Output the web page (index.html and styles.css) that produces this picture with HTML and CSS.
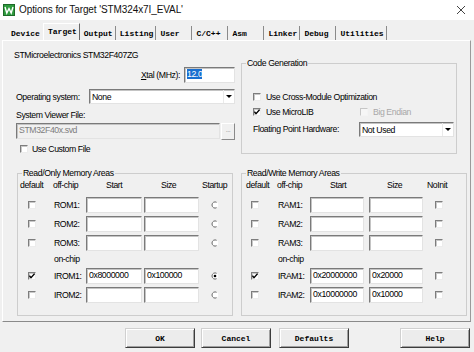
FILE: index.html
```html
<!DOCTYPE html>
<html>
<head>
<meta charset="utf-8">
<title>Options for Target</title>
<link rel="stylesheet" href="styles.css">
</head>
<body>
<div class="titlebar">
  <svg class="appicon" width="12" height="12" viewBox="0 0 12 12"><rect x="0.5" y="0.5" width="11" height="11" fill="#2f9b3e" stroke="#1d6a28"/><polyline points="2,3 3.8,9 6,4.5 8.2,9 10,3" fill="none" stroke="#fff" stroke-width="1.4"/></svg>
  <span class="title">Options for Target 'STM324x7I_EVAL'</span>
  <svg class="close" width="10" height="10" viewBox="0 0 10 10"><path d="M1 1L9 9M9 1L1 9" stroke="#444" stroke-width="1"/></svg>
</div>
<nav class="tabs">
  <span class="tab pre">Device</span>
  <span class="tab active">Target</span>
  <span class="tab">Output</span>
  <span class="tab">Listing</span>
  <span class="tab">User</span>
  <span class="tab">C/C++</span>
  <span class="tab">Asm</span>
  <span class="tab">Linker</span>
  <span class="tab">Debug</span>
  <span class="tab">Utilities</span>
</nav>
<main class="panel">
  <section class="device">
    <div class="devname">STMicroelectronics STM32F407ZG</div>
    <div class="xtal-row"><span><u>X</u>tal (MHz):</span><div class="edit xtal"><span class="sel">12.0</span></div></div>
    <div class="os-row"><span>Operating system:</span><div class="combo os"><span class="ctext">None</span><i class="drop"></i></div></div>
    <div class="svf-label">System Viewer File:</div>
    <div class="svf-row"><div class="edit disabled svf">STM32F40x.svd</div><div class="browse">...</div></div>
    <div class="custom"><span class="cb"></span><span>Use Custom File</span></div>
  </section>
  <fieldset class="group codegen">
    <legend>Code Generation</legend>
    <div class="cg-body">
      <div class="opt span2"><span class="cb"></span><span>Use Cross-Module Optimization</span></div>
      <div class="opt"><span class="cb"><svg width="6" height="6" viewBox="0 0 6 6"><polyline points="0.4,2.6 2,4.6 5.6,0.6" fill="none" stroke="#000" stroke-width="1.4"/></svg></span><span>Use MicroLIB</span></div>
      <div class="opt be"><span class="cb dis"></span><span>Big Endian</span></div>
      <div class="opt">Floating Point Hardware:</div>
      <div class="combo fph"><span class="ctext">Not Used</span><i class="drop"></i></div>
    </div>
  </fieldset>
  <fieldset class="group ro">
    <legend>Read/Only Memory Areas</legend>
    <div class="mem-grid">
      <span class="h h1">default</span><span class="h h2">off-chip</span><span class="h h3">Start</span><span class="h h4">Size</span><span class="h">Startup</span>
      <span class="cb k1"></span><span class="lbl">ROM1:</span><span class="edit e3"></span><span class="edit e4"></span><svg class="k5" width="8" height="8" viewBox="0 0 8 8"><circle cx="4" cy="4" r="3.2" fill="#fff"/><path d="M5.6 1.3A3.1 3.1 0 1 0 5.6 6.7" fill="none" stroke="#666" stroke-width="1"/></svg>
      <span class="cb k1"></span><span class="lbl">ROM2:</span><span class="edit e3"></span><span class="edit e4"></span><svg class="k5" width="8" height="8" viewBox="0 0 8 8"><circle cx="4" cy="4" r="3.2" fill="#fff"/><path d="M5.6 1.3A3.1 3.1 0 1 0 5.6 6.7" fill="none" stroke="#666" stroke-width="1"/></svg>
      <span class="cb k1"></span><span class="lbl">ROM3:</span><span class="edit e3"></span><span class="edit e4"></span><svg class="k5" width="8" height="8" viewBox="0 0 8 8"><circle cx="4" cy="4" r="3.2" fill="#fff"/><path d="M5.6 1.3A3.1 3.1 0 1 0 5.6 6.7" fill="none" stroke="#666" stroke-width="1"/></svg>
      <span class="onchip">on-chip</span>
      <span class="cb k1"><svg width="6" height="6" viewBox="0 0 6 6"><polyline points="0.4,2.6 2,4.6 5.6,0.6" fill="none" stroke="#000" stroke-width="1.4"/></svg></span><span class="lbl">IROM1:</span><span class="edit e3">0x8000000</span><span class="edit e4">0x100000</span><svg class="k5" width="8" height="8" viewBox="0 0 8 8"><circle cx="4" cy="4" r="3.2" fill="#fff"/><path d="M5.6 1.3A3.1 3.1 0 1 0 5.6 6.7" fill="none" stroke="#666" stroke-width="1"/><circle cx="4" cy="4" r="1.3" fill="#000"/></svg>
      <span class="cb k1"></span><span class="lbl">IROM2:</span><span class="edit e3"></span><span class="edit e4"></span><svg class="k5" width="8" height="8" viewBox="0 0 8 8"><circle cx="4" cy="4" r="3.2" fill="#fff"/><path d="M5.6 1.3A3.1 3.1 0 1 0 5.6 6.7" fill="none" stroke="#666" stroke-width="1"/></svg>
    </div>
  </fieldset>
  <fieldset class="group rw">
    <legend>Read/Write Memory Areas</legend>
    <div class="mem-grid">
      <span class="h h1">default</span><span class="h h2">off-chip</span><span class="h h3">Start</span><span class="h h4">Size</span><span class="h">NoInit</span>
      <span class="cb k1"></span><span class="lbl">RAM1:</span><span class="edit e3"></span><span class="edit e4"></span><span class="cb k5"></span>
      <span class="cb k1"></span><span class="lbl">RAM2:</span><span class="edit e3"></span><span class="edit e4"></span><span class="cb k5"></span>
      <span class="cb k1"></span><span class="lbl">RAM3:</span><span class="edit e3"></span><span class="edit e4"></span><span class="cb k5"></span>
      <span class="onchip">on-chip</span>
      <span class="cb k1"><svg width="6" height="6" viewBox="0 0 6 6"><polyline points="0.4,2.6 2,4.6 5.6,0.6" fill="none" stroke="#000" stroke-width="1.4"/></svg></span><span class="lbl">IRAM1:</span><span class="edit e3">0x20000000</span><span class="edit e4">0x20000</span><span class="cb k5"></span>
      <span class="cb k1"></span><span class="lbl">IRAM2:</span><span class="edit e3">0x10000000</span><span class="edit e4">0x10000</span><span class="cb k5"></span>
    </div>
  </fieldset>
</main>
<div class="buttons">
  <button class="btn">OK</button>
  <button class="btn cancel">Cancel</button>
  <button class="btn defaults">Defaults</button>
  <button class="btn help">Help</button>
</div>
</body>
</html>
```
FILE: styles.css
```css
* { box-sizing: border-box; margin: 0; padding: 0; }
html, body { margin: 0; padding: 0; }
body {
  width: 474px; height: 352px; overflow: hidden;
  background: #f0f0f0; color: #000;
  font-family: "Liberation Sans", Arial, sans-serif;
  font-size: 8.7px; letter-spacing: -0.4px; line-height: 12px;
}
.titlebar { height: 20px; background: #fff; display: flex; align-items: center; padding: 0 8px 0 3px; }
.appicon { flex: none; margin-right: 4px; }
.title { font-family: "Liberation Sans", Arial, sans-serif; font-size: 10px; letter-spacing: -0.1px; color: #111; }
.close { margin-left: auto; }

.tabs {
  height: 20px; display: flex; align-items: flex-end; padding-left: 7px;
  font-family: "Liberation Mono", "DejaVu Sans Mono", monospace;
  font-size: 8px; font-weight: bold; line-height: 12px; letter-spacing: 0;
}
.tab { height: 14px; min-width: 36px; padding: 2px 2px 0 4px; border-right: 1px solid #8a8a8a; white-space: nowrap; }
.tab.pre { border-right: 0; }
.tab.active { height: 17px; padding-top: 2px; border-top: 1px solid #fff; border-left: 1px solid #fff; border-right: 1px solid #696969; }

.panel {
  height: 282px; margin: 0 3px 0 2px;
  border: 1px solid; border-color: #fff #9a9a9a #8a8a8a #fff;
  padding: 0 3px 0 11px;
  display: grid; grid-template-columns: 227px 226px; align-items: start;
}

.device { width: 221px; }
.devname { margin-top: 8px; height: 12px; }
.xtal-row { margin-top: 6px; height: 15px; display: flex; justify-content: flex-end; align-items: center; gap: 4px; }
.xtal { width: 51px; height: 15px; padding-left: 1px; }
.sel { background: #1a6fd0; color: #fff; }
.os-row { margin-top: 7px; height: 15px; display: flex; align-items: center; padding-left: 2px; white-space: nowrap; }
.os { width: 146px; margin-left: auto; }
.svf-label { margin-top: 5px; height: 12px; padding-left: 2px; }
.svf-row { margin-top: 2px; height: 16px; display: flex; padding-left: 2px; }
.svf { width: 204px; height: 16px; }
.browse {
  width: 14px; height: 17px; margin-left: 1px;
  border: 1px solid; border-color: #fff #8a8a8a #8a8a8a #fff;
  color: #999; font-size: 7px; line-height: 12px; text-align: center; overflow: hidden;
}
.custom { margin-top: 4px; height: 12px; padding-left: 6px; display: flex; align-items: center; gap: 4px; }

.edit {
  display: block; background: #fff; height: 16px;
  border: 1px solid; border-color: #7a7a7a #e3e3e3 #e3e3e3 #7a7a7a;
  box-shadow: inset 1px 1px 0 #c4c4c4;
  padding: 1px 0 0 2px; line-height: 11px; white-space: nowrap; overflow: hidden;
}
.edit.disabled { background: #f0f0f0; color: #7d7d7d; }

.combo {
  display: flex; align-items: center; height: 15px; background: #fff;
  border: 1px solid; border-color: #7a7a7a #e3e3e3 #e3e3e3 #7a7a7a;
  box-shadow: inset 1px 1px 0 #c4c4c4; padding-left: 2px;
}
.ctext { flex: 1; white-space: nowrap; }
.drop { width: 11px; height: 100%; display: flex; align-items: center; justify-content: center; border-left: 1px solid #eaeaea; }
.drop::after { content: ""; border-left: 3px solid transparent; border-right: 3px solid transparent; border-top: 3px solid #000; }

.cb {
  flex: none; width: 8px; height: 8px; background: #fff;
  border: 1px solid; border-color: #7d7d7d #ececec #ececec #7d7d7d;
  box-shadow: inset 1px 1px 0 #c8c8c8;
  display: flex; align-items: center; justify-content: center;
}
.cb svg { flex: none; }
.cb.dis { border-color: #c6c6c6 #f4f4f4 #f4f4f4 #c6c6c6; box-shadow: none; background: #f6f6f6; }

.group { border: 1px solid #cdcdcd; min-width: 0; padding: 0; }
.group legend { margin-left: 4px; padding: 0 1px; line-height: 12px; }

.codegen { margin-top: 16px; width: 216px; }
.cg-body { display: grid; grid-template-columns: 106px auto; row-gap: 3px; padding: 22px 0 16px 11px; align-items: center; }
.opt { display: flex; align-items: center; gap: 5px; height: 12px; white-space: nowrap; }
.span2 { grid-column: 1 / 3; }
.be { margin-left: 1px; color: #a8a8a8; }
.fph { width: 95px; margin-top: 1px; }

.ro { margin: 7px 0 0 3px; width: 216px; --p1: 2px; --k1: 10px; --p2: 5px; --l2: 6px; --p3: 20px; --p4: 17px; --k5: 9px; }
.rw { margin-top: 7px; width: 226px; --p1: 4px; --k1: 9px; --p2: 4px; --l2: 5px; --p3: 20px; --p4: 18px; --k5: 8px; }
.mem-grid {
  display: grid; grid-template-rows: 15px 16px 16px 16px 11px 16px 16px;
  row-gap: 3px; padding-bottom: 12px; align-items: center; justify-items: start;
}
.ro .mem-grid { grid-template-columns: 30px 38px 58px 58px 30px; }
.rw .mem-grid { grid-template-columns: 31px 37px 59px 58px 39px; }
.h { align-self: start; white-space: nowrap; }
.h1 { padding-left: var(--p1); }
.h2 { padding-left: var(--p2); }
.h3 { padding-left: var(--p3); }
.h4 { padding-left: var(--p4); }
.k1 { margin-left: var(--k1); }
.k5 { margin-left: var(--k5); }
.lbl { padding-left: var(--l2); white-space: nowrap; }
.onchip { grid-column: 2 / 6; padding-left: var(--l2); align-self: end; line-height: 11px; }
.ro .e3 { width: 56px; }
.ro .e4 { width: 55px; }
.rw .e3 { width: 54px; }
.rw .e4 { width: 54px; }

.buttons { display: flex; margin-top: 6px; padding-left: 125px; }
.btn {
  width: 70px; height: 20px; background: #ececec; color: #000;
  border: 1px solid; border-color: #d0d0d0 #3c3c3c #3c3c3c #d0d0d0;
  box-shadow: inset 1px 1px 0 #fff, inset -1px -1px 0 #a0a0a0;
  font-family: "Liberation Mono", "DejaVu Sans Mono", monospace; font-size: 8px; font-weight: bold; letter-spacing: 0;
  display: flex; align-items: center; justify-content: center; padding: 0;
}
.cancel { margin-left: 6px; }
.defaults { margin-left: 8px; }
.help { margin-left: 51px; }
```
